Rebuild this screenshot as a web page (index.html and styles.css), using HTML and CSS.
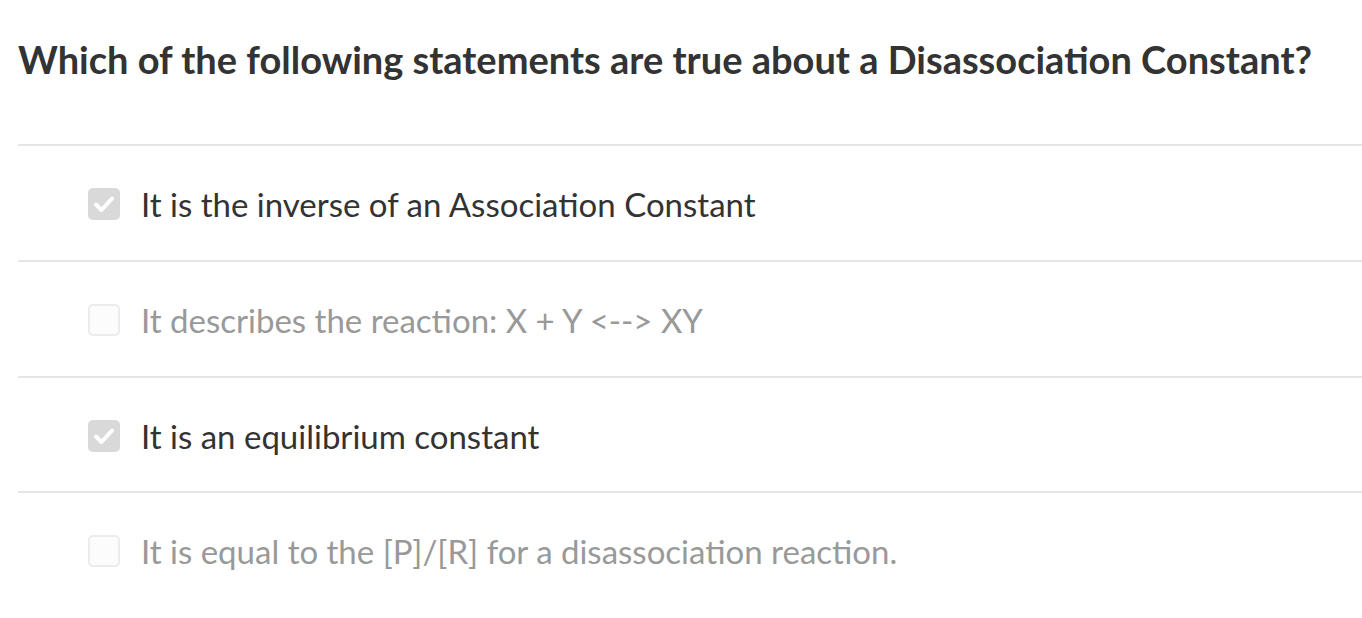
FILE: index.html
```html
<!DOCTYPE html>
<html>
<head>
<meta charset="utf-8">
<link rel="stylesheet" href="styles.css">
</head>
<body>
<div class="quiz">
  <h1 class="question">Which of the following statements are true about a Disassociation Constant?</h1>
  <ul class="options">
    <li class="option checked"><span class="box"><svg viewBox="0 0 32 32" width="32" height="32"><path d="M8 16.5 L13.5 22 L24 10.5" fill="none" stroke="#fff" stroke-width="4" stroke-linecap="round" stroke-linejoin="round"/></svg></span><span class="label">It is the inverse of an Association Constant</span></li>
    <li class="option"><span class="box"></span><span class="label">It describes the reaction: X + Y &lt;--&gt; XY</span></li>
    <li class="option checked short"><span class="box"><svg viewBox="0 0 32 32" width="32" height="32"><path d="M8 16.5 L13.5 22 L24 10.5" fill="none" stroke="#fff" stroke-width="4" stroke-linecap="round" stroke-linejoin="round"/></svg></span><span class="label">It is an equilibrium constant</span></li>
    <li class="option short"><span class="box"></span><span class="label">It is equal to the [P]/[R] for a disassociation reaction.</span></li>
  </ul>
</div>
</body>
</html>
```

FILE: styles.css
```css
html, body {
  margin: 0;
  padding: 0;
  background: #fff;
}
.quiz {
  padding-left: 18px;
  font-family: Lato, "Open Sans", sans-serif;
}
.question {
  margin: 0;
  padding-top: 37px;
  height: 144px;
  box-sizing: border-box;
  font-size: 38px;
  font-weight: 700;
  line-height: 44px;
  color: #333;
}
.options {
  list-style: none;
  margin: 0;
  padding: 0;
}
.option {
  height: 116px;
  box-sizing: border-box;
  border-top: 2px solid #e6e6e6;
  display: flex;
  align-items: center;
  padding-left: 70px;
  padding-top: 2px;
  gap: 21px;
  font-size: 33px;
  color: #999;
}
.option.short {
  height: 115px;
}
.option.checked {
  color: #333;
}
.box {
  width: 32px;
  height: 32px;
  box-sizing: border-box;
  border-radius: 5px;
  border: 2px solid #ececec;
  background: #fcfcfc;
  flex: none;
  display: flex;
}
.option.checked .box {
  border: none;
  background: #d9d9d9;
}
.label {
  line-height: 40px;
}
```
